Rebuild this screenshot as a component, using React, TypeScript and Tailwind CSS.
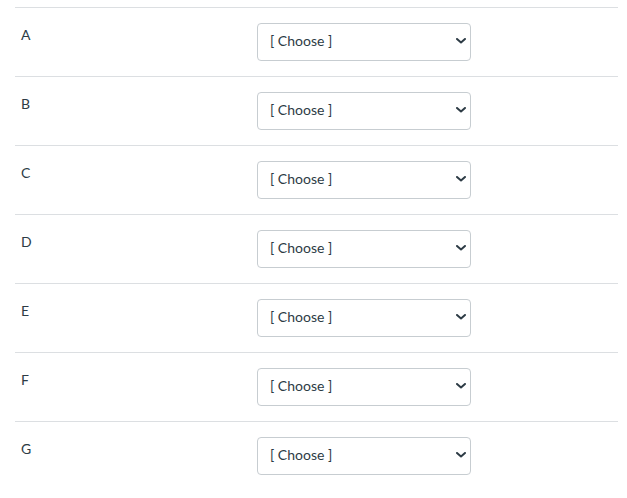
const rows = ['A', 'B', 'C', 'D', 'E', 'F', 'G']

function ChoiceRow({ label }: { label: string }) {
  return (
    <div className="flex items-start border-t border-[#dcdfe2] py-[15px]">
      <div className="w-[242px] pl-[6px] pt-[2px] text-[14px] leading-[20px] text-[#2d3b45]">{label}</div>
      <div className="relative w-[214px]">
        <select
          defaultValue=""
          className="h-[38px] w-full appearance-none rounded-[4px] border border-[#c7cdd1] bg-white pb-[4px] pl-[12px] pr-[24px] text-[14px] text-[#2d3b45] outline-none"
          style={{ fontFamily: 'Lato, "Liberation Sans", sans-serif' }}
        >
          <option value="">[ Choose ]</option>
        </select>
        <svg
          className="pointer-events-none absolute right-[5px] top-[15px]"
          width="10"
          height="6"
          viewBox="0 0 10 6"
          fill="none"
        >
          <path d="M1 1l4 3.5L9 1" stroke="#2d3b45" strokeWidth="2" strokeLinecap="round" strokeLinejoin="round" />
        </svg>
      </div>
    </div>
  )
}

export default function App() {
  return (
    <div className="min-h-screen w-full bg-white pt-[7px]" style={{ fontFamily: 'Lato, "Liberation Sans", sans-serif' }}>
      <div className="ml-[15px] w-[603px]">
        {rows.map((r) => (
          <ChoiceRow key={r} label={r} />
        ))}
      </div>
    </div>
  )
}
